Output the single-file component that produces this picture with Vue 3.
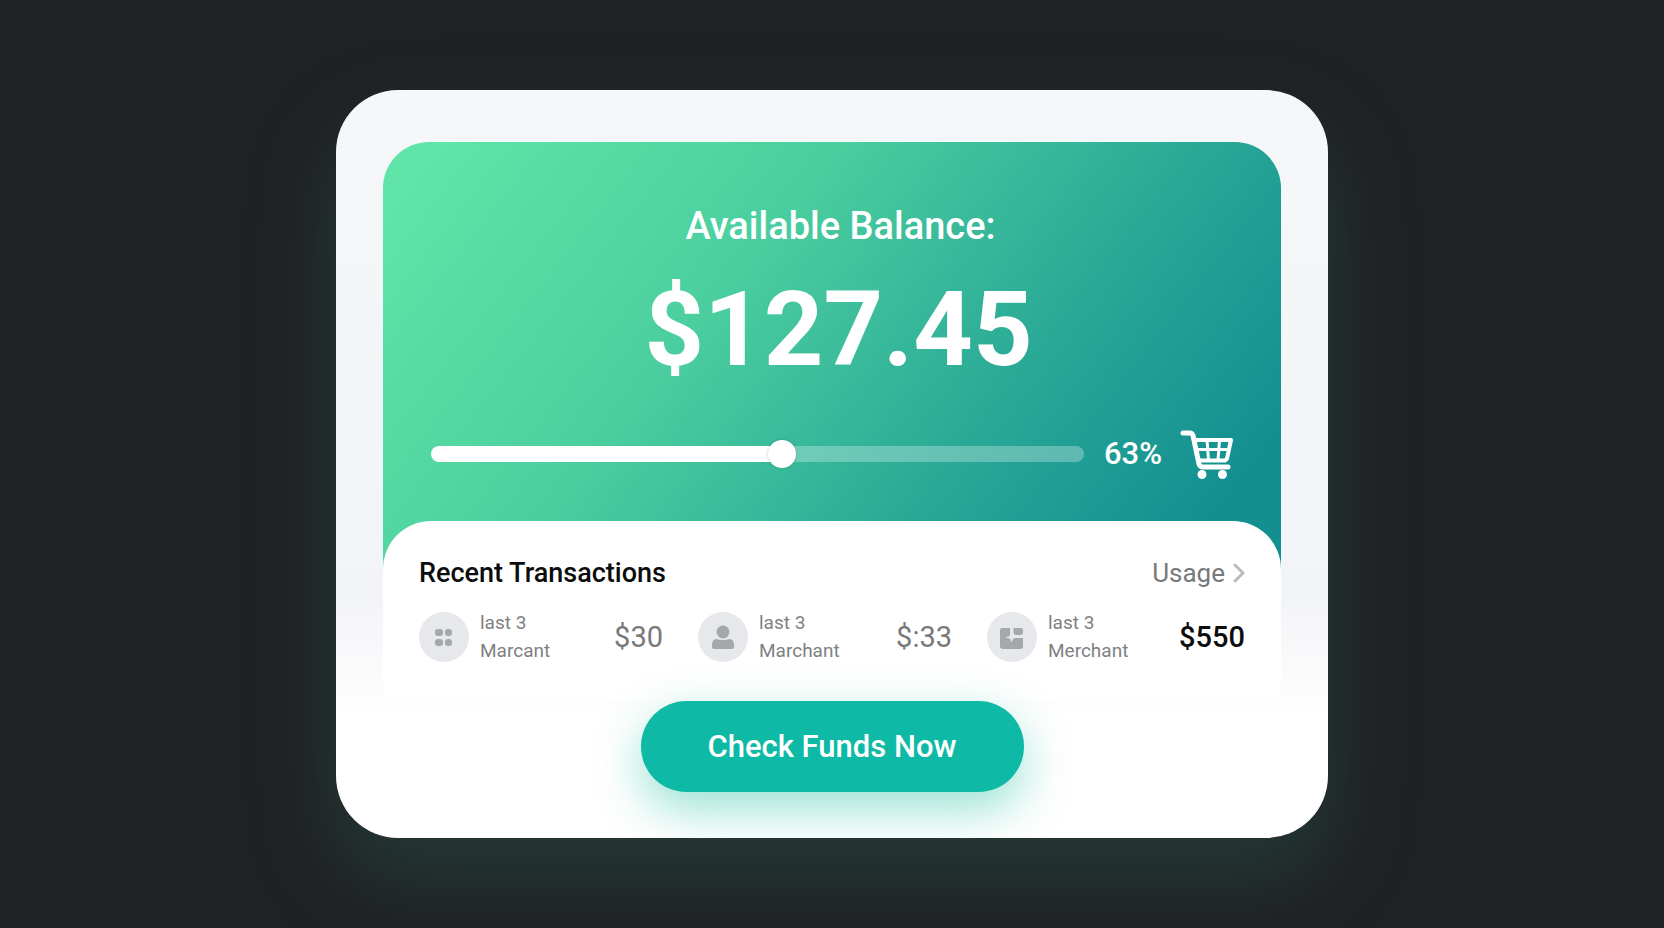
<template>
  <main class="page">
    <section class="card">
      <div class="panel">
        <div class="balance">
          <h1 class="balance-label">Available Balance:</h1>
          <p class="balance-amount">{{ balance }}</p>
          <div class="usage">
            <input
              id="usage"
              v-model.number="level"
              class="slider"
              type="range"
              min="0"
              max="100"
              :style="{ '--level': level / 100 }"
            />
            <label for="usage" class="usage-value">63%</label>
            <svg class="cart" viewBox="0 0 54 50" fill="none" stroke="#fff" stroke-linecap="round" stroke-linejoin="round">
              <path d="M3 4h7q2 0 3 2.500L19 35q1 3 4 3h25" stroke-width="5" />
              <path d="M15 11h36L47 29.500q-1 2-3 2H19.500" stroke-width="4" />
              <path d="M17 20.500h31M27 11l1.500 20M39.500 11l-1.500 20" stroke-width="3" />
              <circle cx="22" cy="45.500" r="4.500" fill="#fff" stroke="none" />
              <circle cx="42.500" cy="45.500" r="4.500" fill="#fff" stroke="none" />
            </svg>
          </div>
        </div>
        <div class="sheet">
          <header class="sheet-header">
            <h2 class="sheet-title">Recent Transactions</h2>
            <a href="#" class="sheet-link">
              Usage
              <svg class="chevron" viewBox="0 0 12 20" fill="none" stroke="#b9bbbd" stroke-width="3" stroke-linecap="round" stroke-linejoin="round">
                <path d="M2 2l8 8-8 8" />
              </svg>
            </a>
          </header>
          <ul class="transactions">
            <li v-for="item in transactions" :key="item.icon" class="transaction">
              <span class="avatar">
                <svg v-if="item.icon === 'grid'" viewBox="0 0 50 50" fill="#a6a7aa">
                  <rect x="16" y="17" width="8" height="7" rx="3" />
                  <rect x="26" y="17" width="7" height="7" rx="3" />
                  <rect x="16" y="27" width="8" height="7" rx="3" />
                  <rect x="26" y="27" width="7" height="7" rx="3" />
                </svg>
                <svg v-else-if="item.icon === 'user'" viewBox="0 0 50 50" fill="#a6a7aa">
                  <circle cx="25" cy="20" r="6.500" />
                  <path d="M18 27q7 2 14 0q4 1 4 6v2q0 2-2 2H16q-2 0-2-2v-2q0-5 4-6z" />
                </svg>
                <svg v-else viewBox="0 0 50 50" fill="#a6a7aa">
                  <path d="M15.500 16H23v8l-5 1.500 5 1 1.500 4L26 27q1-1 3-1h7v8q0 3-3 3H16q-3 0-3-3V18.500q0-2.500 2.500-2.500z" />
                  <path d="M26.500 16H34q2 0 2 2v2q0 3-3 3h-3.500q-3 0-3-3z" />
                </svg>
              </span>
              <span class="merchant">{{ item.period }}<br />{{ item.merchant }}</span>
              <span class="amount" :class="{ strong: item.strong }">{{ item.amount }}</span>
            </li>
          </ul>
        </div>
      </div>
      <button type="button" class="check">Check Funds Now</button>
    </section>
  </main>
</template>
<script setup>
import { ref } from "vue";

const balance = "$127.45";
const level = ref(54);

const transactions = [
  { icon: "grid", period: "last 3", merchant: "Marcant", amount: "$30" },
  { icon: "user", period: "last 3", merchant: "Marchant", amount: "$:33" },
  { icon: "box", period: "last 3", merchant: "Merchant", amount: "$550", strong: true },
];
</script>
<style>
body {
  margin: 0;
  background: #202125;
}
</style>
<style scoped>
.page {
  display: flex;
  align-items: center;
  justify-content: center;
  box-sizing: border-box;
  min-height: 100vh;
  padding: 24px;
  overflow: hidden;
  font-family: Roboto, "Liberation Sans", sans-serif;
}

.card {
  display: flex;
  flex-direction: column;
  align-items: center;
  box-sizing: border-box;
  width: 100%;
  max-width: 992px;
  padding: 52px 47px 46px;
  border-radius: 62px;
  overflow: hidden;
  background: linear-gradient(#f6f7f9 0%, #f3f4f7 68%, #fff 84%);
  box-shadow: 0 40px 88px rgba(50, 130, 110, 0.25);
}

.panel {
  width: 100%;
  border-radius: 46px 46px 0 0;
  background: linear-gradient(128deg, #60e4a7 4%, #4ccf9f 33%, #27a596 64%, #138f90 84%);
}

.balance {
  padding: 60px 47px 42px 48px;
  color: #fff;
  text-align: center;
}

.balance-label {
  margin: 0;
  padding-left: 16px;
  font-size: 38px;
  font-weight: 500;
  line-height: 48px;
}

.balance-amount {
  margin: 16px 0 35px;
  padding-left: 12px;
  font-size: 104px;
  font-weight: 700;
  line-height: 128px;
}

.usage {
  display: flex;
  align-items: center;
}

.slider {
  --fill: calc(14px + (100% - 28px) * var(--level));
  flex: 1;
  min-width: 0;
  height: 28px;
  margin: 0;
  appearance: none;
  background: none;
}

.slider::-webkit-slider-runnable-track {
  height: 16px;
  border-radius: 8px;
  background: linear-gradient(
    to right,
    #fff var(--fill),
    rgba(255, 255, 255, 0.28) var(--fill)
  );
}

.slider::-webkit-slider-thumb {
  width: 28px;
  height: 28px;
  margin-top: -6px;
  border-radius: 50%;
  appearance: none;
  background: #fff;
  box-shadow: 0 0 3px rgba(0, 80, 60, 0.3);
}

.usage-value {
  margin: 0 18px 0 20px;
  font-size: 31px;
  font-weight: 500;
  line-height: 40px;
}

.cart {
  width: 54px;
  height: 50px;
}

.sheet {
  padding: 32px 36px 36px;
  border-radius: 48px 48px 0 0;
  background: #fff;
}

.sheet-header {
  display: flex;
  align-items: center;
  justify-content: space-between;
  line-height: 40px;
}

.sheet-title {
  margin: 0;
  color: #0c0c0d;
  font-size: 27px;
  font-weight: 500;
}

.sheet-link {
  display: flex;
  align-items: center;
  gap: 8px;
  color: #77797b;
  font-size: 26px;
  text-decoration: none;
}

.chevron {
  width: 12px;
  height: 20px;
}

.transactions {
  display: grid;
  grid-template-columns: 244fr 254fr 258fr;
  gap: 35px;
  margin: 16px 0 0;
  padding: 0;
  list-style: none;
}

.transaction {
  display: flex;
  align-items: center;
}

.avatar {
  width: 50px;
  height: 50px;
  margin-right: 11px;
  border-radius: 50%;
  background: #e7e8eb;
}

.merchant {
  color: #7f8183;
  font-size: 19px;
  line-height: 28px;
}

.amount {
  margin-left: auto;
  color: #77797b;
  font-size: 29px;
}

.amount.strong {
  color: #0c0c0d;
  font-weight: 500;
}

.check {
  width: 383px;
  max-width: 100%;
  height: 91px;
  border: 0;
  border-radius: 46px;
  color: #fff;
  background: #0eb9a5;
  box-shadow: 0 18px 48px rgba(14, 185, 150, 0.42);
  font-family: inherit;
  font-size: 31px;
  font-weight: 500;
  cursor: pointer;
}
</style>
